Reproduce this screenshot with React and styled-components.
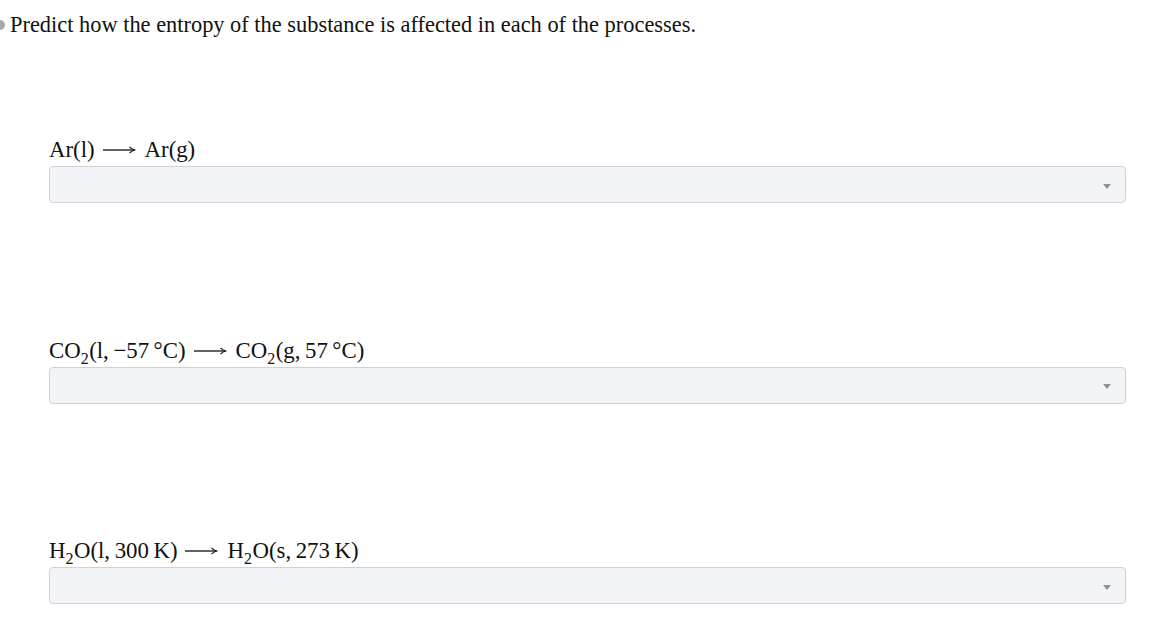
import React from 'react';
import styled, { createGlobalStyle } from 'styled-components';

const GlobalStyle = createGlobalStyle`
  html, body {
    margin: 0;
    padding: 0;
    background: #fff;
  }
  body {
    font-family: "Liberation Serif", "Times New Roman", serif;
    color: #111;
  }
`;

const Page = styled.div`
  width: 1157px;
  min-height: 632px;
  box-sizing: border-box;
  overflow: hidden;
`;

const Prompt = styled.div`
  display: flex;
  align-items: center;
  gap: 5px;
  padding-top: 12px;
  font-size: 22.4px;
  line-height: 26px;
  white-space: nowrap;
`;

const Bullet = styled.span`
  flex: none;
  width: 10px;
  height: 10px;
  margin-left: -5px;
  border-radius: 50%;
  background: #a8a8a8;
`;

const Parts = styled.div`
  display: flex;
  flex-direction: column;
  gap: 133.5px;
  padding: 98px 31px 0 49px;
`;

const Part = styled.div`
  display: flex;
  flex-direction: column;
  gap: 3px;
`;

const Reaction = styled.div`
  display: flex;
  align-items: baseline;
  font-size: 22.8px;
  line-height: 27px;
  height: 27px;
  white-space: nowrap;
`;

const Sub = styled.span`
  font-size: 16px;
  line-height: 0;
  vertical-align: -6px;
  margin-right: 0.5px;
`;

const Arrow = styled.svg`
  flex: none;
  width: 33px;
  height: 8px;
  margin: 0 9px 0 8px;
  align-self: flex-start;
  margin-top: 10px;
`;

const Select = styled.div`
  height: 37px;
  box-sizing: border-box;
  border: 1px solid #cfd1d6;
  border-radius: 4px;
  background: #f3f4f8;
  display: flex;
  align-items: center;
  justify-content: flex-end;
  padding-right: 14px;
`;

const Caret = styled.span`
  width: 0;
  height: 0;
  border-left: 4px solid transparent;
  border-right: 4px solid transparent;
  border-top: 5px solid #8e9096;
  margin-top: 3px;
`;

const LongArrow = () => (
  <Arrow viewBox="0 0 33 8">
    <line x1="0" y1="4" x2="31" y2="4" stroke="#111" strokeWidth="1.3" />
    <path d="M26.5 0.8 Q28.5 3.3 32.3 4 Q28.5 4.7 26.5 7.2" fill="none" stroke="#111" strokeWidth="1.1" />
  </Arrow>
);

const thin = '\u2009';

const parts = [
  {
    left: <>Ar(l)</>,
    right: <>Ar(g)</>,
  },
  {
    left: <>CO<Sub>2</Sub>(l,{thin}−57{thin}°C)</>,
    right: <>CO<Sub>2</Sub>(g,{thin}57{thin}°C)</>,
  },
  {
    left: <>H<Sub>2</Sub>O(l,{thin}300{thin}K)</>,
    right: <>H<Sub>2</Sub>O(s,{thin}273{thin}K)</>,
  },
];

export default function App() {
  return (
    <Page>
      <GlobalStyle />
      <Prompt>
        <Bullet />
        <span>Predict how the entropy of the substance is affected in each of the processes.</span>
      </Prompt>
      <Parts>
        {parts.map((p, i) => (
          <Part key={i}>
            <Reaction>
              <span>{p.left}</span>
              <LongArrow />
              <span>{p.right}</span>
            </Reaction>
            <Select>
              <Caret />
            </Select>
          </Part>
        ))}
      </Parts>
    </Page>
  );
}
